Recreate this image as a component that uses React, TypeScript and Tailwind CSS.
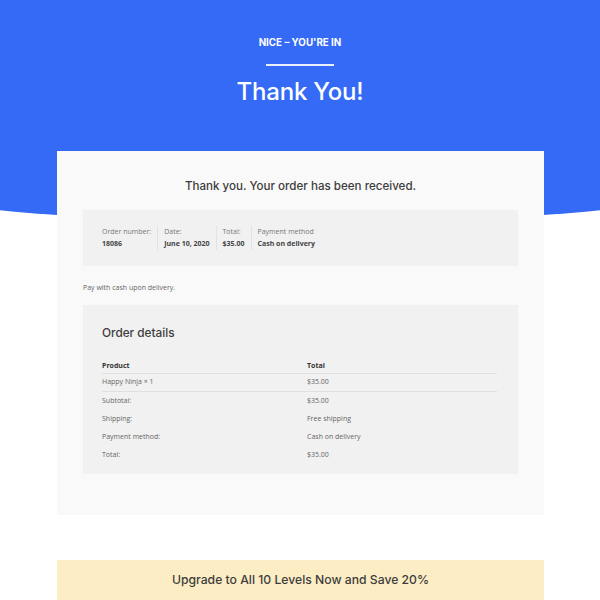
import React from "react";

const heading = { fontFamily: "Inter, 'Noto Sans', sans-serif" };
const body = { fontFamily: "'Open Sans', 'Noto Sans', sans-serif" };

export default function App() {
  const rows: [string, string][] = [
    ["Subtotal:", "$35.00"],
    ["Shipping:", "Free shipping"],
    ["Payment method:", "Cash on delivery"],
    ["Total:", "$35.00"],
  ];
  return (
    <div className="w-[600px] h-[600px] overflow-hidden bg-white relative">
      <div className="mx-[-150px] h-[223px] bg-[#346af5] rounded-b-[450px_50px] flex flex-col items-center pt-[37px]" style={heading}>
        <div className="text-[9.8px] font-bold text-white leading-[12px]">NICE – YOU'RE IN</div>
        <div className="w-[68px] h-[2px] bg-white mt-[15px] opacity-90"></div>
        <div className="text-[24px] font-medium text-white leading-[30px] mt-[11px] tracking-[-0.2px]">Thank You!</div>
      </div>

      <div className="relative mx-[57px] -mt-[72px] w-[487px] h-[364px] bg-[#f9f9f9] px-[26px] pt-[27px]">
        <div className="text-center text-[11.6px] font-medium text-[#3d3d3d] leading-[16px]" style={heading}>
          Thank you. Your order has been received.
        </div>

        <div className="mt-[16px] h-[56px] bg-[#f1f1f1] flex items-center pl-[19px]" style={body}>
          <div className="flex text-[7px] leading-[12px] text-[#444]">
            <div className="pr-[6px] border-r border-[#e2e2e2]">
              <div className="text-[#777]">Order number:</div>
              <div className="font-bold">18086</div>
            </div>
            <div className="px-[6px] border-r border-[#e2e2e2]">
              <div className="text-[#777]">Date:</div>
              <div className="font-bold">June 10, 2020</div>
            </div>
            <div className="px-[6px] border-r border-[#e2e2e2]">
              <div className="text-[#777]">Total:</div>
              <div className="font-bold">$35.00</div>
            </div>
            <div className="px-[6px]">
              <div className="text-[#777]">Payment method</div>
              <div className="font-bold">Cash on delivery</div>
            </div>
          </div>
        </div>

        <div className="mt-[17px] text-[7px] text-[#666] leading-[10px]" style={body}>
          Pay with cash upon delivery.
        </div>

        <div className="mt-[12px] h-[169px] bg-[#f1f1f1] px-[19px] pt-[20px]">
          <div className="text-[11.8px] font-medium text-[#3d3d3d] leading-[16px]" style={heading}>Order details</div>
          <div className="mt-[18px] text-[7px] text-[#666]" style={body}>
            <div className="flex h-[15px] items-center border-b border-[#e0e0e0] font-bold text-[#333] mr-[2px]">
              <div className="w-[205px]">Product</div>
              <div>Total</div>
            </div>
            <div className="flex h-[18px] items-center border-b border-[#e0e0e0] mr-[2px]">
              <div className="w-[205px]">Happy Ninja × 1</div>
              <div>$35.00</div>
            </div>
            {rows.map(([a, b]) => (
              <div key={a} className="flex h-[18px] items-center">
                <div className="w-[205px]">{a}</div>
                <div>{b}</div>
              </div>
            ))}
          </div>
        </div>
      </div>

      <div className="mx-[57px] mt-[45px] w-[487px] h-[60px] bg-[#fdedc5] flex justify-center pt-[12px]">
        <div className="text-[12.2px] font-medium text-[#3d3d3d] leading-[16px]" style={heading}>
          Upgrade to All 10 Levels Now and Save 20%
        </div>
      </div>
    </div>
  );
}
